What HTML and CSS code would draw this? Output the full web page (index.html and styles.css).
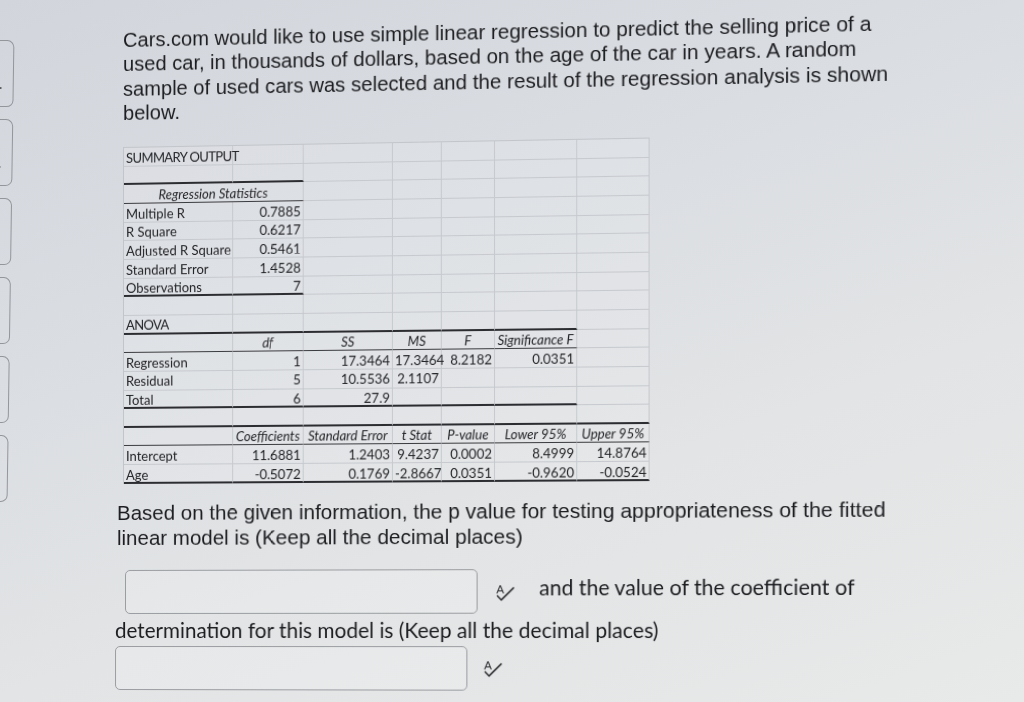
FILE: index.html
```html
<!DOCTYPE html>
<html lang="en">
<head>
<meta charset="utf-8">
<title>Regression question</title>
<link rel="stylesheet" href="styles.css">
</head>
<body>
<div class="screen">
  <aside class="rail">
    <div class="tab"><span class="dot"></span></div>
    <div class="tab"><span class="dot"></span></div>
    <div class="tab"><span class="dot"></span></div>
    <div class="tab tab-top"><span class="dot"></span><span class="dot"></span></div>
    <div class="tab"></div>
    <div class="tab"></div>
  </aside>
  <main class="content">
    <p class="question">Cars.com would like to use simple linear regression to predict the selling price of a used car, in thousands of dollars, based on the age of the car in years. A random sample of used cars was selected and the result of the regression analysis is shown below.</p>

    <div class="sheet">
      <div class="c caps">SUMMARY OUTPUT</div><div class="c"></div><div class="c"></div><div class="c"></div><div class="c"></div><div class="c"></div><div class="c"></div>
      <div class="c tk"></div><div class="c tk"></div><div class="c"></div><div class="c"></div><div class="c"></div><div class="c"></div><div class="c"></div>
      <div class="c tn it s2">Regression Statistics</div><div class="c"></div><div class="c"></div><div class="c"></div><div class="c"></div><div class="c"></div>
      <div class="c">Multiple R</div><div class="c r">0.7885</div><div class="c"></div><div class="c"></div><div class="c"></div><div class="c"></div><div class="c"></div>
      <div class="c">R Square</div><div class="c r">0.6217</div><div class="c"></div><div class="c"></div><div class="c"></div><div class="c"></div><div class="c"></div>
      <div class="c">Adjusted R Square</div><div class="c r">0.5461</div><div class="c"></div><div class="c"></div><div class="c"></div><div class="c"></div><div class="c"></div>
      <div class="c">Standard Error</div><div class="c r">1.4528</div><div class="c"></div><div class="c"></div><div class="c"></div><div class="c"></div><div class="c"></div>
      <div class="c tk">Observations</div><div class="c r tk">7</div><div class="c"></div><div class="c"></div><div class="c"></div><div class="c"></div><div class="c"></div>
      <div class="c"></div><div class="c"></div><div class="c"></div><div class="c"></div><div class="c"></div><div class="c"></div><div class="c"></div>
      <div class="c tk caps">ANOVA</div><div class="c tk"></div><div class="c tk"></div><div class="c tk"></div><div class="c tk"></div><div class="c tk"></div><div class="c"></div>
      <div class="c tn"></div><div class="c tn it">df</div><div class="c tn it">SS</div><div class="c tn it">MS</div><div class="c tn it">F</div><div class="c tn it">Significance F</div><div class="c"></div>
      <div class="c">Regression</div><div class="c r">1</div><div class="c r">17.3464</div><div class="c r">17.3464</div><div class="c r">8.2182</div><div class="c r">0.0351</div><div class="c"></div>
      <div class="c">Residual</div><div class="c r">5</div><div class="c r">10.5536</div><div class="c r">2.1107</div><div class="c"></div><div class="c"></div><div class="c"></div>
      <div class="c tk">Total</div><div class="c r tk">6</div><div class="c r tk">27.9</div><div class="c tk"></div><div class="c tk"></div><div class="c tk"></div><div class="c"></div>
      <div class="c tk"></div><div class="c tk"></div><div class="c tk"></div><div class="c tk"></div><div class="c tk"></div><div class="c tk"></div><div class="c tk"></div>
      <div class="c tn"></div><div class="c tn it">Coefficients</div><div class="c tn it">Standard Error</div><div class="c tn it">t Stat</div><div class="c tn it">P-value</div><div class="c tn it">Lower 95%</div><div class="c tn it">Upper 95%</div>
      <div class="c">Intercept</div><div class="c r">11.6881</div><div class="c r">1.2403</div><div class="c r">9.4237</div><div class="c r">0.0002</div><div class="c r">8.4999</div><div class="c r">14.8764</div>
      <div class="c tk">Age</div><div class="c r tk">-0.5072</div><div class="c r tk">0.1769</div><div class="c r tk">-2.8667</div><div class="c r tk">0.0351</div><div class="c r tk">-0.9620</div><div class="c r tk">-0.0524</div>
    </div>

    <p class="prompt">Based on the given information, the p value for testing appropriateness of the fitted linear model is (Keep all the decimal places)</p>

    <div class="answer">
      <span class="field"></span>
      <svg class="spell" viewBox="-2 -3 22 21" aria-hidden="true"><text x="0.3" y="9" font-family="Liberation Sans, sans-serif" font-size="11.5" fill="#2e2f32">A</text><path d="M1.4 11.4 L5.2 15.4 L17 3.6" fill="none" stroke="#2e2f32" stroke-width="1.5" stroke-linecap="round" stroke-linejoin="round"/></svg>
      <span class="after">and the value of the coefficient of</span>
    </div>
    <p class="cont">determination for this model is (Keep all the decimal places)</p>
    <div class="answer answer-2">
      <span class="field field-2"></span>
      <svg class="spell spell-2" viewBox="-2 -3 22 21" aria-hidden="true"><text x="0.3" y="9" font-family="Liberation Sans, sans-serif" font-size="11.5" fill="#2e2f32">A</text><path d="M1.4 11.4 L5.2 15.4 L17 3.6" fill="none" stroke="#2e2f32" stroke-width="1.5" stroke-linecap="round" stroke-linejoin="round"/></svg>
    </div>
  </main>
</div>
</body>
</html>
```

FILE: styles.css
```css
html, body {
  margin: 0;
  padding: 0;
}

body {
  width: 1024px;
  height: 702px;
  overflow: hidden;
  background: linear-gradient(160deg, #d2d5db 0%, #dadde2 35%, #e2e4e5 65%, #e8e9e9 100%);
  font-family: "Liberation Sans", Arial, sans-serif;
  color: #1c1d20;
}

.screen {
  display: flex;
  height: 702px;
}

/* left rail with cut-off question tabs */
.rail {
  width: 16px;
  flex-shrink: 0;
  display: flex;
  flex-direction: column;
  gap: 12px;
  padding-top: 40px;
  transform: rotate(0.85deg);
  transform-origin: 0 0;
}

.tab {
  margin-left: -25px;
  width: 40px;
  height: 67px;
  box-sizing: border-box;
  border: 1.5px solid #93969b;
  border-radius: 7px;
  display: flex;
  flex-direction: column;
  justify-content: flex-end;
  align-items: flex-end;
  gap: 6px;
  padding: 0 11px 17px 0;
}

.tab-top {
  justify-content: flex-start;
  padding: 16px 11px 0 0;
}

.dot {
  width: 2px;
  height: 2px;
  background: #55585c;
  border-radius: 50%;
}

/* main question column */
.content {
  flex: 1;
  padding-left: 99px;
  transform-origin: 107px 636px;
  transform: perspective(2000px) rotateY(-4.2deg);
}

.question {
  margin: 28px 0 0 8px;
  width: 768px;
  font-size: 20.1px;
  line-height: 24.3px;
}

/* spreadsheet picture */
.sheet {
  margin: 22px 0 0 8px;
  width: max-content;
  display: grid;
  grid-template-columns: 109px 70px 88px 48px 52px 80px 70px;
  grid-auto-rows: 18.65px;
  border-top: 1px solid #c2c5ca;
  border-left: 1px solid #c2c5ca;
  background: rgba(255, 255, 255, 0.12);
  font-family: Lato, "Open Sans", sans-serif;
  font-size: 13px;
  color: #232427;
}

.c {
  box-sizing: border-box;
  border-right: 1px solid #c6c9ce;
  border-bottom: 1px solid #c6c9ce;
  padding: 1.5px 2px 0 2px;
  line-height: 16px;
  white-space: nowrap;
}

.caps {
  letter-spacing: -0.6px;
}

.r {
  text-align: right;
}

.it {
  font-style: italic;
  text-align: center;
}

.s2 {
  grid-column: span 2;
}

.tk {
  border-bottom: 2px solid #2c2d30;
}

.tn {
  border-bottom: 1px solid #3a3b3e;
}

/* prompt and answers */
.prompt {
  margin: 16px 0 0 2px;
  width: 790px;
  font-size: 20.5px;
  line-height: 25px;
}

.answer {
  display: flex;
  align-items: flex-start;
  margin-top: 20px;
}

.answer-2 {
  margin-top: 3px;
}

.field {
  width: 349px;
  height: 44px;
  box-sizing: border-box;
  margin-left: 10px;
  border: 1px solid #9a9da1;
  border-radius: 5px;
  background: rgba(255, 255, 255, 0.16);
}

.field-2 {
  margin-left: 0;
}

.spell {
  width: 22px;
  height: 21px;
  margin: 12px 0 0 16px;
}

.spell-2 {
  margin: 11px 0 0 14px;
}

.after {
  margin: 6px 0 0 22px;
  font-family: Lato, "Open Sans", sans-serif;
  font-size: 20.6px;
  line-height: 25px;
}

.cont {
  margin: 4px 0 0 0;
  font-family: Lato, "Open Sans", sans-serif;
  font-size: 20.6px;
  line-height: 25px;
}
```
